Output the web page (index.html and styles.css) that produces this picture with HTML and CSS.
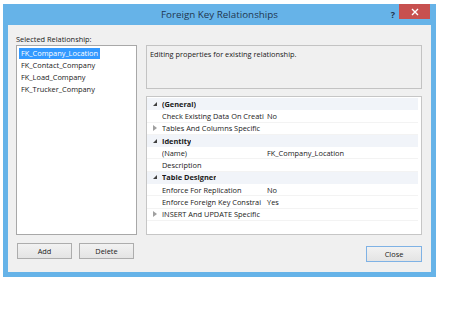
FILE: index.html
```html
<!DOCTYPE html>
<html>
<head>
<meta charset="utf-8">
<link rel="stylesheet" href="styles.css">
</head>
<body>
<div class="window">
  <div class="titlebar">
    <div class="title">Foreign Key Relationships</div>
    <div class="help">?</div>
    <div class="close-x">
      <svg width="8" height="8" viewBox="0 0 8 8"><path d="M1 1L7 7M7 1L1 7" stroke="#fff" stroke-width="1.4"/></svg>
    </div>
  </div>
  <div class="content">
    <div class="label">Selected Relationship:</div>
    <div class="main">
      <div class="left">
        <div class="listbox">
          <div class="item"><span class="sel">FK_Company_Location</span></div>
          <div class="item"><span>FK_Contact_Company</span></div>
          <div class="item"><span>FK_Load_Company</span></div>
          <div class="item"><span>FK_Trucker_Company</span></div>
        </div>
        <div class="btnrow">
          <div class="btn">Add</div>
          <div class="btn">Delete</div>
        </div>
      </div>
      <div class="right">
        <div class="desc">Editing properties for existing relationship.</div>
        <div class="grid">
          <div class="row cat"><span class="glyph exp"></span><span class="name">(General)</span></div>
          <div class="row"><span class="glyph"></span><span class="name">Check Existing Data On Creati</span><span class="val">No</span></div>
          <div class="row"><span class="glyph col"></span><span class="name">Tables And Columns Specific</span><span class="val"></span></div>
          <div class="row cat"><span class="glyph exp"></span><span class="name">Identity</span></div>
          <div class="row"><span class="glyph"></span><span class="name">(Name)</span><span class="val">FK_Company_Location</span></div>
          <div class="row"><span class="glyph"></span><span class="name">Description</span><span class="val"></span></div>
          <div class="row cat"><span class="glyph exp"></span><span class="name">Table Designer</span></div>
          <div class="row"><span class="glyph"></span><span class="name">Enforce For Replication</span><span class="val">No</span></div>
          <div class="row"><span class="glyph"></span><span class="name">Enforce Foreign Key Constrai</span><span class="val">Yes</span></div>
          <div class="row"><span class="glyph col"></span><span class="name">INSERT And UPDATE Specific</span><span class="val"></span></div>
        </div>
        <div class="btnrow end">
          <div class="btn default">Close</div>
        </div>
      </div>
    </div>
  </div>
</div>
</body>
</html>
```

FILE: styles.css
```css
* { box-sizing: border-box; }
body {
  margin: 0;
  background: #ffffff;
  font-family: "Open Sans", "Noto Sans", sans-serif;
  font-size: 7.4px;
  color: #1a1a1a;
}
.window {
  margin: 4px 0 0 3px;
  width: 433px;
  height: 273px;
  background: #66b3e8;
  display: flex;
  flex-direction: column;
}
.titlebar {
  height: 22px;
  position: relative;
  display: flex;
  align-items: center;
  justify-content: center;
}
.title {
  font-size: 9.8px;
  color: #1f3650;
  padding-bottom: 1px;
}
.help {
  position: absolute;
  right: 41px;
  top: 4px;
  font-weight: bold;
  font-size: 9px;
  color: #1f3650;
}
.close-x {
  position: absolute;
  right: 6px;
  top: 0;
  width: 31px;
  height: 15px;
  background: #c7504f;
  display: flex;
  align-items: center;
  justify-content: center;
}
.content {
  flex: 1;
  margin: 0 5px 5px 5px;
  background: #f0f0f0;
  padding: 6px 9px 10px 8px;
  display: flex;
  flex-direction: column;
}
.label {
  height: 14px;
  line-height: 11px;
  padding-top: 3px;
}
.main {
  flex: 1;
  display: flex;
  gap: 9px;
}
.left {
  width: 121px;
  display: flex;
  flex-direction: column;
}
.listbox {
  height: 190px;
  background: #fff;
  border: 1px solid #a8a8a8;
  padding: 2px 2px;
}
.item {
  height: 12px;
  line-height: 11px;
}
.item span {
  display: inline-block;
  padding: 0 2px;
  height: 11px;
}
.item span.sel {
  background: #3399ff;
  color: #fff;
}
.btnrow {
  display: flex;
  gap: 7px;
  margin-top: 8px;
  padding-left: 1px;
}
.btnrow.end {
  justify-content: flex-end;
  margin-top: 11px;
}
.btn {
  width: 55px;
  height: 16px;
  border: 1px solid #adadad;
  background: linear-gradient(#f2f2f2, #e4e4e4);
  display: flex;
  align-items: center;
  justify-content: center;
  color: #1a1a1a;
}
.btn.default {
  width: 56px;
  border-color: #7fb2e5;
}
.right {
  flex: 1;
  display: flex;
  flex-direction: column;
}
.desc {
  height: 44px;
  border: 1px solid #c3c3c3;
  background: #f0f0f0;
  padding: 3px 3px;
  line-height: 10px;
}
.grid {
  margin-top: 7px;
  height: 139px;
  background: #fff;
  border: 1px solid #c6c6c6;
  padding: 1px 3px 0 0;
}
.row {
  height: 12.3px;
  display: flex;
  align-items: center;
  border-bottom: 1px solid #f3f3f3;
}
.row.cat {
  background: #f1f4f9;
  font-weight: bold;
  border-bottom-color: #f1f4f9;
}
.glyph {
  width: 15px;
  flex: none;
  display: flex;
  justify-content: center;
  padding-left: 1px;
}
.glyph.exp::before {
  content: "";
  width: 0;
  height: 0;
  border-left: 4px solid transparent;
  border-bottom: 4px solid #404040;
}
.glyph.col::before {
  content: "";
  width: 0;
  height: 0;
  border-top: 3px solid transparent;
  border-bottom: 3px solid transparent;
  border-left: 4px solid #a0a0a0;
}
.name {
  width: 105px;
  flex: none;
  white-space: nowrap;
  overflow: hidden;
}
.row.cat .name {
  width: auto;
}
.val {
  flex: 1;
  padding-left: 0;
  white-space: nowrap;
}
```
